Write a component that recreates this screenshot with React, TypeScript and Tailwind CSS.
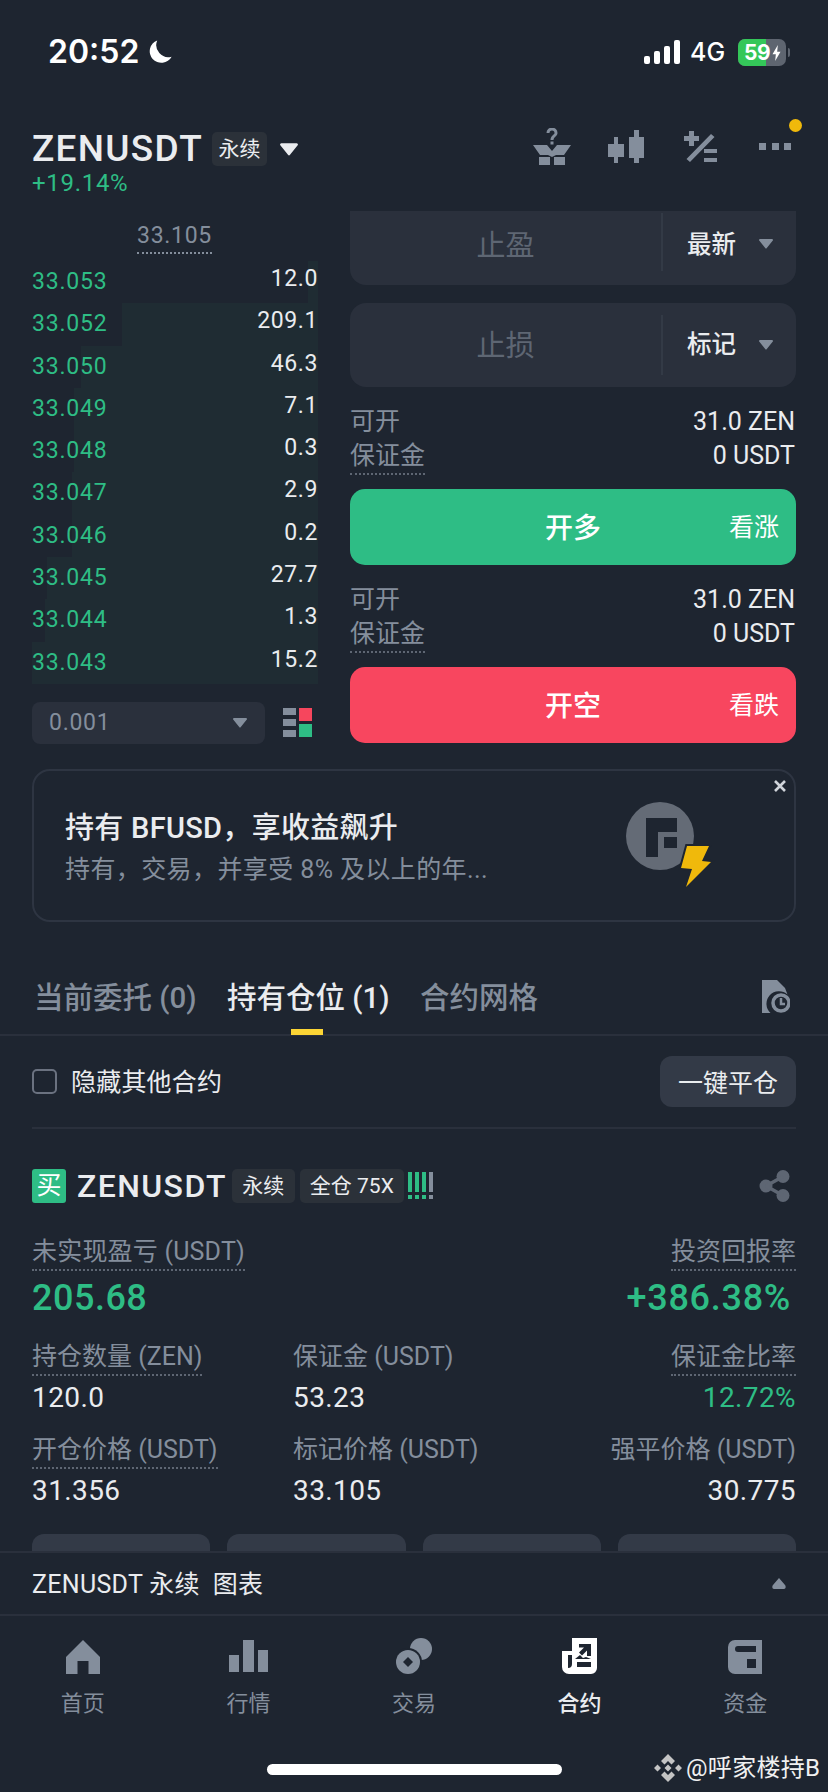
import React from "react";

const CJK = "font-['Roboto','Noto_Sans_CJK_SC',sans-serif]";

const rows = [
  { p: "33.053", v: "12.0", left: 308 },
  { p: "33.052", v: "209.1", left: 122 },
  { p: "33.050", v: "46.3", left: 81 },
  { p: "33.049", v: "7.1", left: 74 },
  { p: "33.048", v: "0.3", left: 74 },
  { p: "33.047", v: "2.9", left: 72 },
  { p: "33.046", v: "0.2", left: 72 },
  { p: "33.045", v: "27.7", left: 47 },
  { p: "33.044", v: "1.3", left: 45 },
  { p: "33.043", v: "15.2", left: 32 },
];

function Tri({ className = "" }: { className?: string }) {
  return (
    <svg viewBox="0 0 14 11" className={className}>
      <path d="M1 1h12a1 1 0 0 1 .8 1.6L7.800 10a1 1 0 0 1-1.600 0L.2 2.600A1 1 0 0 1 1 1z" fill="currentColor" />
    </svg>
  );
}

function Dotted({ children, className = "" }: { children: React.ReactNode; className?: string }) {
  return <span className={`inline-block border-b-2 border-dotted border-[#5e6673] ${className}`}>{children}</span>;
}

function StatusBar() {
  return (
    <div className="h-[125px] flex justify-between pl-[48px] pr-[38px] pt-[32px] shrink-0">
      <div className="flex items-start gap-[8px] text-white">
        <span className="text-[32px] leading-[40px] font-semibold font-['Inter',sans-serif]">20:52</span>
        <svg viewBox="0 0 28 28" className="w-[26px] h-[26px] mt-[7px]">
          <path d="M11 1.500A12.500 12.500 0 1 0 26.500 19 13 13 0 0 1 11 1.500z" fill="#fff" />
        </svg>
      </div>
      <div className="flex items-center h-[40px] text-white">
        <svg viewBox="0 0 36 24" className="w-[36px] h-[24px] mr-[10px] ml-[-1px]">
          <rect x="0" y="16" width="6" height="8" rx="2" fill="#fff" />
          <rect x="10" y="11" width="6" height="13" rx="2" fill="#fff" />
          <rect x="20" y="6" width="6" height="18" rx="2" fill="#fff" />
          <rect x="30" y="0" width="6" height="24" rx="2" fill="#fff" />
        </svg>
        <span className="w-[36px] text-[25px] leading-[40px] font-medium font-['Inter',sans-serif] mr-[12px] whitespace-nowrap">4G</span>
        <div className="relative w-[48px] h-[27px] rounded-[7px] overflow-hidden bg-[#5e6570] flex">
          <div className="w-[28px] bg-[#34c759]" />
          <span className="absolute left-[6px] top-0 text-[21px] leading-[27px] font-bold font-['Inter',sans-serif] text-white tracking-[-0.5px]">59</span>
          <svg viewBox="0 0 12 24" className="absolute right-[4px] top-[6px] w-[11px] h-[16px]">
            <path d="M8 0L0 14h5l-1 10 8-14H7z" fill="#fff" />
          </svg>
        </div>
        <div className="w-[2px] h-[9px] ml-[2px] rounded-r bg-[#5e6570]" />
      </div>
    </div>
  );
}

function BoxIcon() {
  return (
    <svg viewBox="0 0 38 37" className="w-[38px] h-[37px]" fill="#848e9c">
      <path d="M0 17h14l5 6v6l-4-2H7zM38 17H24l-5 6v6l4-2h8z" />
      <rect x="6" y="29" width="11" height="8" />
      <rect x="21" y="29" width="11" height="8" />
      <path d="M13.500 5a5.500 5.500 0 0 1 11 0c0 3.200-3.800 3.800-4 7h-3c0-4.600 4-5.200 4-7a2.500 2.500 0 0 0-5 0zM17.500 13.500h3v3h-3z" />
    </svg>
  );
}

function CandleIcon() {
  return (
    <svg viewBox="0 0 36 33" className="w-[36px] h-[33px]" fill="#848e9c">
      <rect x="0" y="14" width="16" height="13" />
      <rect x="6" y="7" width="4" height="26" />
      <rect x="21" y="7" width="15" height="21" />
      <rect x="26" y="0" width="5" height="33" />
    </svg>
  );
}

function PercentIcon() {
  return (
    <svg viewBox="0 0 33 31" className="w-[33px] h-[31px]" fill="#848e9c">
      <path d="M5 0h5v5h5v5h-5v5H5v-5H0V5h5zM27 3l3.500 3L6 31l-3.500-3zM20 18h13v4H20zM20 27h13v4H20z" />
    </svg>
  );
}

function Header() {
  return (
    <div className="h-[86px] shrink-0 px-[32px] relative">
      <div className="flex items-center h-[48px]">
        <span className="text-[37px] leading-[48px] font-medium tracking-[1.3px] text-[#eaecef]">ZENUSDT</span>
        <span className="ml-[9px] w-[55px] h-[34px] rounded-[5px] bg-[#2b3139] text-[#eaecef] text-[21px] leading-[34px] text-center">永续</span>
        <Tri className="w-[18px] h-[14px] ml-[13px] text-[#eaecef]" />
        <div className="ml-auto flex items-center pr-[5px] -mt-[5px]">
          <BoxIcon />
          <span className="ml-[37px]"><CandleIcon /></span>
          <span className="ml-[40px]"><PercentIcon /></span>
          <div className="relative flex gap-[5.500px] ml-[42px] w-[32px] h-[7px]">
            <i className="w-[7px] h-[7px] bg-[#848e9c]" />
            <i className="w-[7px] h-[7px] bg-[#848e9c]" />
            <i className="w-[7px] h-[7px] bg-[#848e9c]" />
            <i className="absolute left-[30px] top-[-24px] w-[13px] h-[13px] rounded-full bg-[#f0b90b]" />
          </div>
        </div>
      </div>
      <div className="text-[24px] leading-[26px] -mt-[3px] text-[#2ebd85] tracking-[0.7px]">+19.14%</div>
    </div>
  );
}

function OrderBook() {
  return (
    <div className="w-[286px] shrink-0">
      <div className="h-[50px] pl-[105px] pt-[8px]">
        <Dotted className="text-[#848e9c] text-[23px] leading-[33px] tracking-[0.7px] border-b border-[#848e9c]">33.105</Dotted>
      </div>
      {rows.map((r) => (
        <div key={r.p} className="relative h-[42.3px] flex justify-between">
          <div className="absolute top-0 bottom-0 right-0 bg-[#1f2c33]" style={{ left: r.left - 32 }} />
          <span className="relative text-[#2ebd85] text-[23px] leading-[42px] tracking-[0.8px]">{r.p}</span>
          <span className="relative text-[#eaecef] text-[23px] leading-[35px] tracking-[0.6px]">{r.v}</span>
        </div>
      ))}
      <div className="mt-[18px] flex items-center">
        <div className="w-[233px] h-[42px] rounded-[8px] bg-[#2a303c] flex items-center justify-between pl-[17px] pr-[18px]">
          <span className="text-[23px] leading-[42px] text-[#848e9c] tracking-[0.7px]">0.001</span>
          <Tri className="w-[14px] h-[11px] text-[#848e9c]" />
        </div>
        <svg viewBox="0 0 30 29" className="w-[30px] h-[29px] ml-[18px]">
          <rect x="0" y="0" width="13" height="7" fill="#848e9c" />
          <rect x="0" y="11" width="13" height="7" fill="#848e9c" />
          <rect x="0" y="22" width="13" height="7" fill="#848e9c" />
          <rect x="16" y="0" width="13" height="13" fill="#f6465d" />
          <rect x="16" y="16" width="13" height="13" fill="#2ebd85" />
        </svg>
      </div>
    </div>
  );
}

function Field({ label, sel, className, divider, labelShift, selShift }: { label: string; sel: string; className: string; divider: string; labelShift: string; selShift: string }) {
  return (
    <div className={`flex bg-[#2a303c] ${className}`}>
      <div className={`w-[311px] flex items-center justify-center text-[29px] text-[#5e6673] ${labelShift}`}>{label}</div>
      <div className="flex-1 flex items-center">
        <div className={`w-[2px] self-stretch bg-[#333a46] ${divider}`} />
        <div className={`flex items-center ${selShift}`}>
          <span className="ml-[24px] text-[24.500px] text-[#eaecef] font-medium">{sel}</span>
          <Tri className="ml-[23px] w-[14px] h-[11px] text-[#848e9c] -mt-[3px]" />
        </div>
      </div>
    </div>
  );
}

function Avail() {
  return (
    <div className="text-[25px] leading-[36px] mt-[17px] pr-[1px]">
      <div className="flex justify-between h-[34px] text-[#eaecef]">
        <span className="text-[#848e9c]">可开</span>
        <span>31.0 ZEN</span>
      </div>
      <div className="flex justify-between items-start h-[34px] text-[#eaecef]">
        <Dotted className="text-[#848e9c] h-[37px]">保证金</Dotted>
        <span>0 USDT</span>
      </div>
    </div>
  );
}

function ActionButton({ a, b, color }: { a: string; b: string; color: string }) {
  return (
    <div className={`mt-[17px] relative h-[76px] rounded-[15px] flex items-center justify-center ${color}`}>
      <span className="text-[28px] text-white font-medium pt-[4px]">{a}</span>
      <span className="absolute right-[17px] top-[19px] text-[25px] leading-[40px] text-white">{b}</span>
    </div>
  );
}

function Trade() {
  return (
    <div className="flex-1 ml-[32px] min-w-0">
      <Field label="止盈" sel="最新" className="h-[74px] rounded-b-[16px]" divider="mt-[2px] mb-[14px]" labelShift="pb-[2px]" selShift="pb-[6px]" />
      <Field label="止损" sel="标记" className="h-[84px] mt-[18px] rounded-[16px]" divider="my-[12px]" labelShift="pt-[4px]" selShift="pt-[1px]" />
      <Avail />
      <ActionButton a="开多" b="看涨" color="bg-[#2ebd85]" />
      <Avail />
      <ActionButton a="开空" b="看跌" color="bg-[#f8465f]" />
    </div>
  );
}

function Banner() {
  return (
    <div className="relative mx-[32px] mt-[25px] h-[153px] rounded-[18px] border-2 border-[#2e3542] pl-[31px] pt-[37px] shrink-0">
      <div className="text-[29px] leading-[40px] font-medium text-[#eaecef] whitespace-nowrap tracking-[0.3px]">持有 BFUSD，享收益飙升</div>
      <div className="text-[25px] leading-[36px] mt-[4px] text-[#848e9c] tracking-[0.4px] whitespace-nowrap">持有，交易，并享受 8% 及以上的年...</div>
      <svg viewBox="0 0 14 14" className="absolute right-[7px] top-[8px] w-[14px] h-[14px]">
        <path d="M2 2l10 10M12 2L2 12" stroke="#d0d4da" strokeWidth="2.600" />
      </svg>
      <svg viewBox="0 0 100 90" className="absolute left-[586px] top-[29px] w-[100px] h-[90px]">
        <circle cx="40" cy="36" r="34" fill="#646b76" />
        <path d="M26 18h31v14H38v25H26z" fill="#1e2530" />
        <rect x="44" y="37" width="13" height="11" fill="#1e2530" />
        <path d="M67 46h22l-7 15 9 1-25 25 6-18-11-1z" fill="#f0b90b" stroke="#1e2530" strokeWidth="4" paintOrder="stroke" />
      </svg>
    </div>
  );
}

function Tabs() {
  return (
    <div className="relative mt-[40px] h-[74px] border-b-2 border-[#2a303c] pl-[34px] pr-[38px] flex items-center shrink-0 text-[29.500px] text-[#848e9c] font-medium">
      <span className="w-[193px] whitespace-nowrap">当前委托 (0)</span>
      <span className="w-[193px] text-[#eaecef] whitespace-nowrap">持有仓位 (1)</span>
      <span>合约网格</span>
      <svg viewBox="0 0 28 33" className="ml-auto w-[28px] h-[33px] mb-[3px]">
        <path d="M0 0h15l8 8 2.500 6.500A11 11 0 0 0 8.500 33H0z" fill="#848e9c" />
        <circle cx="19" cy="23" r="8" fill="none" stroke="#848e9c" strokeWidth="3.500" />
        <path d="M19 18v6h4" stroke="#848e9c" strokeWidth="2.500" fill="none" />
      </svg>
      <i className="absolute left-[291px] bottom-[-1px] w-[32px] h-[6px] bg-[#fcd535]" />
    </div>
  );
}

function HideRow() {
  return (
    <div className="mx-[32px] h-[93px] shrink-0 border-b-2 border-[#2a303c] flex items-center justify-between pb-[1px]">
      <div className="flex items-center">
        <span className="w-[25px] h-[25px] rounded-[5px] border-2 border-[#6b7280]" />
        <span className="ml-[14px] text-[25px] tracking-[0.2px] text-[#eaecef] pt-[4px]">隐藏其他合约</span>
      </div>
      <div className="w-[136px] h-[51px] rounded-[12px] bg-[#333a47] text-[#eaecef] text-[25px] leading-[55px] text-center">一键平仓</div>
    </div>
  );
}

function Metric({ label, value, dotted, right, valueClass = "text-[#eaecef]" }: { label: string; value: string; dotted?: boolean; right?: boolean; valueClass?: string }) {
  return (
    <div className={`flex flex-col ${right ? "items-end" : "items-start"}`}>
      {dotted ? (
        <Dotted className="text-[#848e9c] text-[25px] leading-[38px] h-[38px]">{label}</Dotted>
      ) : (
        <span className="text-[#848e9c] text-[25px] leading-[38px] h-[38px]">{label}</span>
      )}
      <span className={`text-[28px] leading-[36px] mt-[4px] tracking-[0.4px] ${valueClass}`}>{value}</span>
    </div>
  );
}

function Position() {
  return (
    <div className="px-[32px] flex-1 min-h-0 overflow-hidden pt-[39px]">
      <div className="flex items-center h-[35px]">
        <span className="w-[34px] h-[34px] rounded-[3px] bg-[#2ebd85] text-white text-[25px] leading-[34px] text-center">买</span>
        <span className="ml-[11px] text-[32px] font-medium text-[#eaecef] tracking-[1.4px]">ZENUSDT</span>
        <span className="ml-[5px] w-[63px] h-[34px] rounded-[5px] bg-[#2b3139] text-[#eaecef] text-[21px] leading-[34px] text-center">永续</span>
        <span className="ml-[5px] w-[104px] h-[34px] rounded-[5px] bg-[#2b3139] text-[#eaecef] text-[21px] leading-[34px] text-center">全仓 75X</span>
        <svg viewBox="0 0 26 27" className="ml-[4px] w-[26px] h-[27px]">
          {[0, 7, 14].map((x) => (
            <g key={x} fill="#2ebd85">
              <rect x={x} y="0" width="4" height="20" />
              <rect x={x} y="23" width="4" height="4" />
            </g>
          ))}
          <rect x="21" y="0" width="4" height="20" fill="#848e9c" />
          <rect x="21" y="23" width="4" height="4" fill="#848e9c" />
        </svg>
        <svg viewBox="0 0 31 32" className="ml-auto mr-[6px] w-[31px] h-[32px]">
          <circle cx="7" cy="16" r="6.500" fill="#5e6673" />
          <circle cx="24" cy="6.500" r="6.500" fill="#5e6673" />
          <circle cx="24" cy="25.500" r="6.500" fill="#5e6673" />
          <path d="M7 16L24 6.500M7 16l17 9.500" stroke="#5e6673" strokeWidth="3.500" />
        </svg>
      </div>

      <div className="flex justify-between mt-[30px]">
        <div className="flex flex-col items-start">
          <Dotted className="text-[#848e9c] text-[25px] leading-[38px] h-[38px] tracking-[0.2px]">未实现盈亏 (USDT)</Dotted>
          <span className="text-[36px] leading-[44px] mt-[5px] font-medium text-[#2ebd85] tracking-[0.5px]">205.68</span>
        </div>
        <div className="flex flex-col items-end">
          <Dotted className="text-[#848e9c] text-[25px] leading-[38px] h-[38px]">投资回报率</Dotted>
          <span className="text-[36px] leading-[44px] mt-[5px] mr-[5px] font-medium text-[#2ebd85] tracking-[0.7px]">+386.38%</span>
        </div>
      </div>

      <div className="grid grid-cols-[261px_1fr_auto] mt-[18px] gap-y-[15px]">
        <Metric label="持仓数量 (ZEN)" value="120.0" dotted />
        <Metric label="保证金 (USDT)" value="53.23" />
        <Metric label="保证金比率" value="12.72%" dotted right valueClass="text-[#2ebd85]" />
        <Metric label="开仓价格 (USDT)" value="31.356" dotted />
        <Metric label="标记价格 (USDT)" value="33.105" />
        <Metric label="强平价格 (USDT)" value="30.775" right />
      </div>

      <div className="grid grid-cols-4 gap-[17px] mt-[25px]">
        {[0, 1, 2, 3].map((i) => (
          <div key={i} className="h-[51px] rounded-[12px] bg-[#333a47]" />
        ))}
      </div>
    </div>
  );
}

function ChartBar() {
  return (
    <div className="h-[65px] shrink-0 bg-[#1e2530] border-y-2 border-[#2a303c] px-[32px] flex items-center justify-between text-[25px] tracking-[0.3px] text-[#eaecef]">
      <span className="pt-[3px]">ZENUSDT 永续&nbsp;&nbsp;图表</span>
      <svg viewBox="0 0 14 11" className="w-[14px] h-[11px] mr-[10px] text-[#848e9c]">
        <path d="M7 0l6 7c1 1 1 4-1 4H2C0 11 0 8 1 7z" fill="currentColor" />
      </svg>
    </div>
  );
}

const nav = [
  {
    label: "首页",
    icon: (
      <svg viewBox="0 0 34 34" className="w-[34px] h-[34px]" fill="#848e9c">
        <path d="M17 0l17 17v17H22.500V21h-11v13H0V17z" />
      </svg>
    ),
  },
  {
    label: "行情",
    icon: (
      <svg viewBox="0 0 39 32" className="w-[39px] h-[32px] mb-[2px]" fill="#848e9c">
        <rect x="0" y="15" width="10" height="17" />
        <rect x="14" y="0" width="11" height="32" />
        <rect x="29" y="10" width="10" height="22" />
      </svg>
    ),
  },
  {
    label: "交易",
    icon: (
      <svg viewBox="0 0 36 36" className="w-[36px] h-[36px]">
        <circle cx="25" cy="11" r="11" fill="#848e9c" />
        <circle cx="12" cy="24" r="14" fill="#1e2530" />
        <circle cx="12" cy="24" r="12" fill="#848e9c" />
        <path d="M12 19l5 5-5 5-5-5z" fill="#1e2530" />
      </svg>
    ),
  },
  {
    label: "合约",
    active: true,
    icon: (
      <svg viewBox="0 0 35 36" className="w-[35px] h-[36px]">
        <path fill="#fff" d="M10 0h25v30a6 6 0 0 1-6 6H7a7 7 0 0 1-7-7V13h10z" />
        <path fill="#1e2530" d="M6 17h4v9q0 4-4 4zM15 24h14v5H15zM17 6h12v12h-4v-5.500l-5 5-3-3 5-5H17zM13 21l5-4 3 3 3-1 5 2z" />
      </svg>
    ),
  },
  {
    label: "资金",
    icon: (
      <svg viewBox="0 0 34 34" className="w-[34px] h-[34px]">
        <path fill="#848e9c" d="M7 0h27v34H7a7 7 0 0 1-7-7V7a7 7 0 0 1 7-7z" />
        <path fill="#1e2530" d="M10 6h18v6H10a3 3 0 0 1 0-6zM19 19h9v9h-9z" />
      </svg>
    ),
  },
];

function BottomNav() {
  return (
    <div className="relative h-[176px] shrink-0">
      <div className="grid grid-cols-5 pt-[20px]">
        {nav.map((n) => (
          <div key={n.label} className="flex flex-col items-center">
            <div className="h-[38px] flex items-end justify-center">{n.icon}</div>
            <span className={`mt-[14px] text-[22px] leading-[32px] ${n.active ? "text-[#eaecef] font-medium" : "text-[#848e9c]"}`}>{n.label}</span>
          </div>
        ))}
      </div>
      <div className="absolute left-[267px] top-[148px] w-[295px] h-[11px] rounded-full bg-white" />
      <div className="absolute left-[654px] top-[137px] flex items-center text-[#f0f0f0]">
        <svg viewBox="0 0 28 28" className="w-[28px] h-[28px]" fill="#c4c4c4">
          <path d="M14 0l7 7-3.500 3.500L14 7l-3.500 3.500L7 7zM3.500 10.500L7 14l-3.500 3.500L0 14zM24.500 10.500L28 14l-3.500 3.500L21 14zM14 10.500l3.500 3.500-3.500 3.500-3.500-3.500zM14 28l-7-7 3.500-3.500L14 21l3.500-3.500L21 21z" />
        </svg>
        <span className="ml-[4px] text-[24px] leading-[30px] tracking-[0.3px] whitespace-nowrap">@呼家楼持B</span>
      </div>
    </div>
  );
}

export default function App() {
  return (
    <div className={`w-[828px] h-[1792px] overflow-hidden bg-[#1e2530] flex flex-col ${CJK}`}>
      <StatusBar />
      <Header />
      <div className="flex px-[32px] shrink-0 h-[533px]">
        <OrderBook />
        <Trade />
      </div>
      <Banner />
      <Tabs />
      <HideRow />
      <Position />
      <ChartBar />
      <BottomNav />
    </div>
  );
}
